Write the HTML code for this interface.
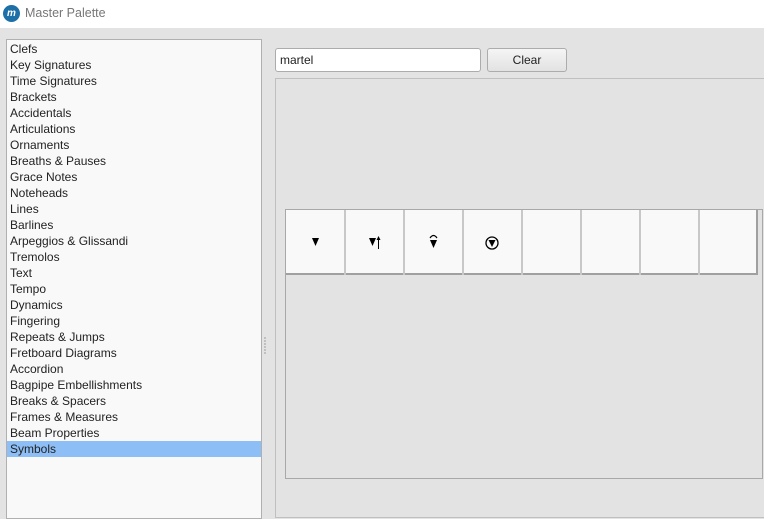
<!DOCTYPE html>
<html><head><meta charset="utf-8"><style>
*{margin:0;padding:0;box-sizing:border-box}
body{width:764px;height:507px;background:#e3e3e3;font-family:"Liberation Sans","DejaVu Sans",sans-serif;font-size:12px;color:#222;position:relative;overflow:hidden}
.title{position:absolute;left:0;top:0;width:764px;height:28px;background:#fff}
.title .t{position:absolute;left:25px;top:6px;color:#777;font-size:12.5px}
.logo{position:absolute;left:3px;top:5px;width:17px;height:17px;border-radius:50%;background:#1d6fa8;color:#fff;font-size:10px;line-height:17px;text-align:center;font-style:italic;font-weight:bold}
.list{position:absolute;left:6px;top:39px;width:256px;height:480px;background:#f9f9f9;border:1px solid #b0b0b0}
.list div{height:16px;line-height:16px;padding-left:3px;font-size:12px;white-space:nowrap}
.list .sel{background:#8dbff6}
.list .first{margin-top:1px}
.inp{position:absolute;left:275px;top:48px;width:206px;height:24px;background:#fff;border:1px solid #acacac;border-radius:3px;padding-left:4px;line-height:22px}
.btn{position:absolute;left:487px;top:48px;width:80px;height:24px;background:linear-gradient(#f5f5f5,#e2e2e2);border:1px solid #acacac;border-radius:3px;text-align:center;line-height:22px}
.outer{position:absolute;left:275px;top:78px;width:500px;height:440px;border:1px solid #c0c0c0}
.inner{position:absolute;left:285px;top:209px;width:478px;height:270px;border:1px solid #a8a8a8}
.cells{position:absolute;left:286px;top:210px;width:472px;height:65px;background:#f9f9f9;border-bottom:2px solid #a0a0a0;border-right:2px solid #a0a0a0}
.sep{position:absolute;top:210px;width:2px;height:65px;background:#c8c8c8}
.dots{position:absolute;left:264px;top:337px;width:2px}
.dots i{display:block;width:2px;height:2px;background:#c0c0c0;margin-bottom:1px}
</style></head><body>
<div class="title"><div class="logo">m</div><div class="t">Master Palette</div></div>
<div class="list">
<div class="first">Clefs</div><div>Key Signatures</div><div>Time Signatures</div><div>Brackets</div><div>Accidentals</div><div>Articulations</div><div>Ornaments</div><div>Breaths &amp; Pauses</div><div>Grace Notes</div><div>Noteheads</div><div>Lines</div><div>Barlines</div><div>Arpeggios &amp; Glissandi</div><div>Tremolos</div><div>Text</div><div>Tempo</div><div>Dynamics</div><div>Fingering</div><div>Repeats &amp; Jumps</div><div>Fretboard Diagrams</div><div>Accordion</div><div>Bagpipe Embellishments</div><div>Breaks &amp; Spacers</div><div>Frames &amp; Measures</div><div>Beam Properties</div><div class="sel">Symbols</div>
</div>
<div class="dots"><i></i><i></i><i></i><i></i><i></i><i></i></div>
<div class="inp">martel</div>
<div class="btn">Clear</div>
<div class="outer"></div>
<div class="inner"></div>
<div class="cells"></div>
<div class="sep" style="left:344px"></div>
<div class="sep" style="left:403px"></div>
<div class="sep" style="left:462px"></div>
<div class="sep" style="left:521px"></div>
<div class="sep" style="left:580px"></div>
<div class="sep" style="left:639px"></div>
<div class="sep" style="left:698px"></div>
<svg style="position:absolute;left:0;top:0" width="764" height="507">
<polygon points="312,238 319,238 315.5,246" fill="#000"/>
<polygon points="369,238 376,238 372.5,246" fill="#000"/>
<line x1="378.5" y1="238" x2="378.5" y2="249" stroke="#000" stroke-width="1"/>
<polygon points="376.5,240 378.5,236 380.5,240" fill="#000"/>
<polygon points="430,240 437,240 433.5,248" fill="#000"/>
<path d="M430,238 Q433.5,233 437,238" fill="none" stroke="#000" stroke-width="1.2"/>
<circle cx="492" cy="243" r="6" fill="none" stroke="#000" stroke-width="1.3"/>
<polygon points="488.5,240 495.5,240 492,247" fill="#000"/>
</svg>
</body></html>
